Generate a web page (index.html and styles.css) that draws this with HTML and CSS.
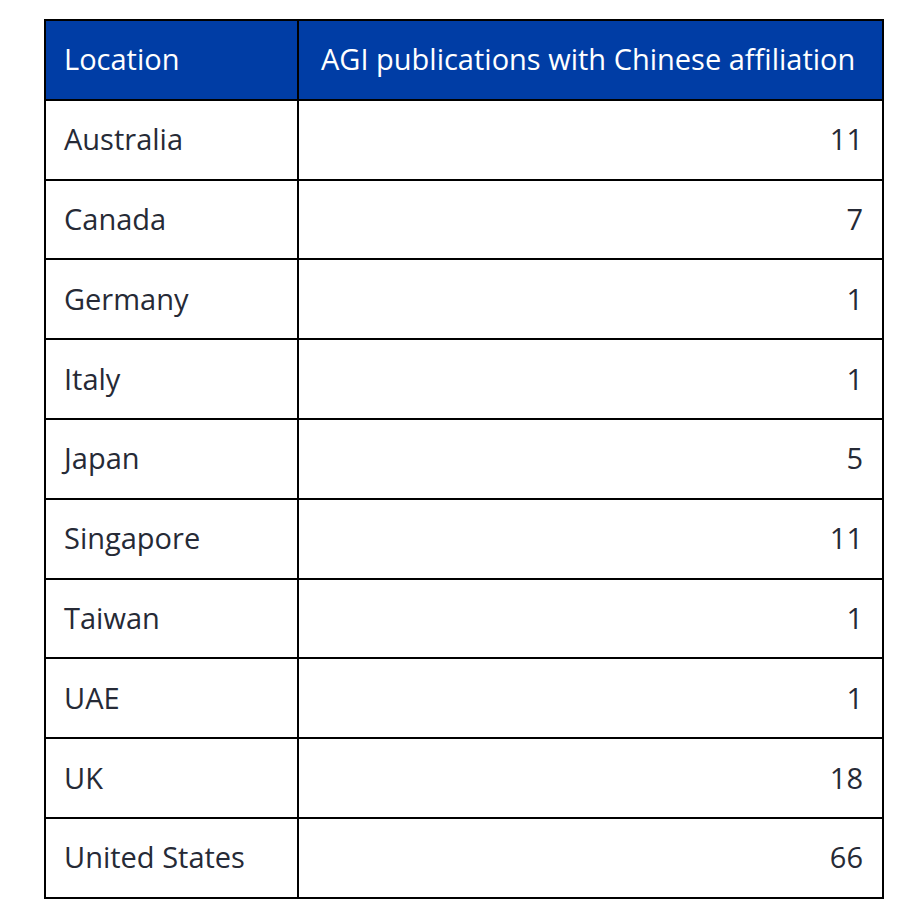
FILE: index.html
```html
<!DOCTYPE html>
<html>
<head>
<meta charset="utf-8">
<link rel="stylesheet" href="styles.css">
</head>
<body>
<table class="data">
  <thead>
    <tr><th class="loc">Location</th><th class="num">AGI publications with Chinese affiliation</th></tr>
  </thead>
  <tbody>
    <tr><td>Australia</td><td class="num">11</td></tr>
    <tr><td>Canada</td><td class="num">7</td></tr>
    <tr><td>Germany</td><td class="num">1</td></tr>
    <tr><td>Italy</td><td class="num">1</td></tr>
    <tr><td>Japan</td><td class="num">5</td></tr>
    <tr><td>Singapore</td><td class="num">11</td></tr>
    <tr><td>Taiwan</td><td class="num">1</td></tr>
    <tr><td>UAE</td><td class="num">1</td></tr>
    <tr><td>UK</td><td class="num">18</td></tr>
    <tr><td>United States</td><td class="num">66</td></tr>
  </tbody>
</table>
</body>
</html>
```
FILE: styles.css
```css
html, body {
  margin: 0;
  padding: 0;
  background: #ffffff;
}
body {
  padding: 19px 0 0 44px;
  font-family: "Open Sans", "Noto Sans", sans-serif;
}
.data {
  border-collapse: collapse;
  width: 840px;
  table-layout: fixed;
}
.data th, .data td {
  border: 2px solid #000;
  padding: 0 19px 0 18px;
  font-size: 29px;
  font-weight: 400;
  color: #262a36;
  box-sizing: border-box;
  height: 79.8px;
  vertical-align: middle;
  text-align: left;
  white-space: nowrap;
}
.data th {
  background: #003da5;
  color: #ffffff;
  padding-bottom: 3px;
}
.data td {
  padding-bottom: 2px;
}
.data th.loc {
  width: 253px;
}
.data .num {
  text-align: right;
}
.data th.num {
  text-align: left;
  padding-left: 22px;
}
```
